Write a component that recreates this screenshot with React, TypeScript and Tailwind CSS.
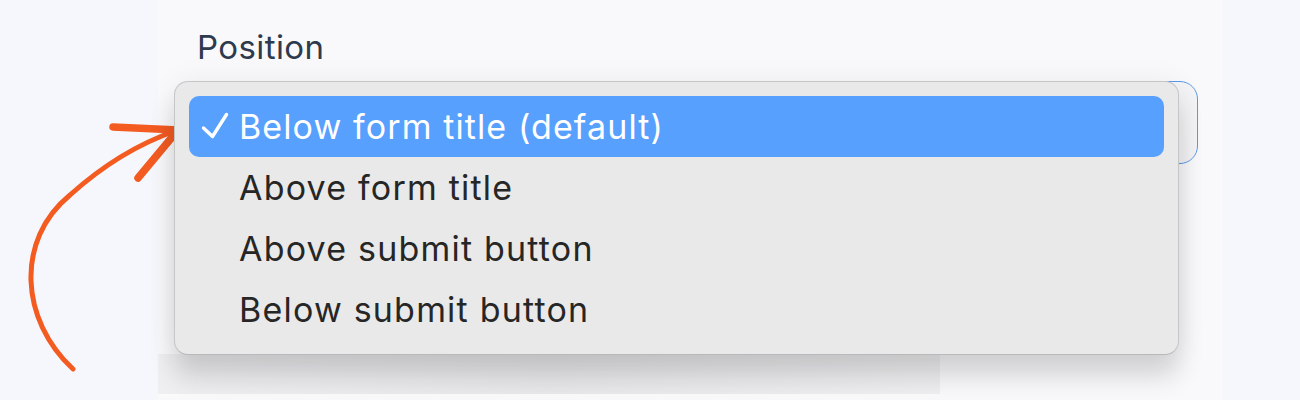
import React from "react";

const options = [
  "Below form title (default)",
  "Above form title",
  "Above submit button",
  "Below submit button",
];

function Arrow() {
  return (
    <svg
      className="absolute left-0 top-0 pointer-events-none"
      width="200"
      height="400"
      viewBox="0 0 200 400"
      fill="none"
    >
      <path
        d="M73 369 C20 320 15 240 70 195 C100 168 135 145 175 131"
        stroke="#f35b21"
        strokeWidth="5"
        strokeLinecap="round"
      />
      <path
        d="M113 127 L178 130 L138 178"
        stroke="#f35b21"
        strokeWidth="7.5"
        strokeLinecap="round"
        strokeLinejoin="round"
      />
    </svg>
  );
}

function Check() {
  return (
    <svg width="30" height="30" viewBox="0 0 30 30" fill="none">
      <path
        d="M2.5 16 L11.5 24.5 L25.5 2.5"
        stroke="white"
        strokeWidth="3.4"
        strokeLinecap="round"
        strokeLinejoin="round"
      />
    </svg>
  );
}

export default function App() {
  return (
    <div
      className="relative w-full h-[400px] overflow-hidden bg-[#f6f7fc] flex"
      style={{ fontFamily: "Inter, 'Noto Sans', sans-serif" }}
    >
      {/* Form panel */}
      <div className="ml-[158px] w-[1065px] h-full bg-[#f9f9fb] flex flex-col pl-[39px]">
        <label className="pt-[27px] mb-[14px] text-[33px] leading-[40px] tracking-[0.4px] text-[#2e3a4e]">
          Position
        </label>

        {/* Select field */}
        <div className="relative w-[1001px] h-[83px] shrink-0 rounded-[18px] border-[1.5px] border-[#5b9ae8] bg-[#f4f4f6]">
          {/* Open menu */}
          <div className="absolute -left-[24px] -top-[1.5px] z-10 w-[1005px] rounded-[14px] border border-[#c6c6c6] border-b-[#b9b9b9] bg-[#e9e9e9] px-[14px] py-[14px] shadow-[0_22px_26px_rgba(0,0,0,0.14),0_0_30px_rgba(0,0,0,0.06)]">
            {options.map((opt, i) => (
              <div
                key={opt}
                className={
                  i === 0
                    ? "relative h-[61px] flex items-center pl-[50px] rounded-[10px] bg-[#57a0fe] text-white text-[34px] tracking-[1.1px]"
                    : "relative h-[61px] flex items-center pl-[50px] text-[#262626] text-[34px] tracking-[1.2px]"
                }
              >
                {i === 0 && (
                  <span className="absolute left-[12px] top-[16px]">
                    <Check />
                  </span>
                )}
                {opt}
              </div>
            ))}
          </div>
        </div>

        {/* Next field, mostly covered by the menu */}
        <div className="mt-[190px] -ml-[39px] w-[782px] h-[43px] bg-gradient-to-r from-[#efeff1] via-[#e8e8ea] to-[#efeff1] border-b-[3px] border-[#fafafb]" />
      </div>

      <Arrow />
    </div>
  );
}
